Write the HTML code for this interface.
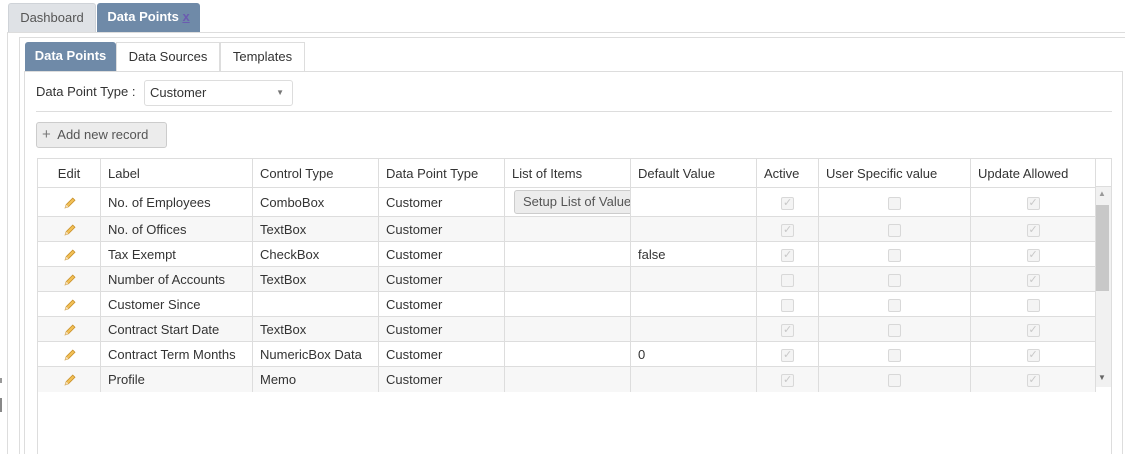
<!DOCTYPE html>
<html><head><style>
*{box-sizing:border-box;margin:0;padding:0}
html{width:1125px;height:454px;overflow:hidden}
body{width:1125px;height:454px;overflow:hidden;background:#fff;font-family:"Liberation Sans",Arial,sans-serif;font-size:13px;color:#333;position:relative}
.a{position:absolute}
.tab{position:absolute;height:29px;line-height:28px;text-align:center;font-size:13px}
table{border-collapse:collapse;table-layout:fixed;position:absolute;left:37px;top:158px;width:1058px}
td{border:1px solid #ddd;height:25px;padding:0 7px;white-space:nowrap;overflow:hidden;font-size:13px}
tr.h td{height:29px}
tr.f td{height:29px}
tr.g td{background:#f7f7f7}
.c{text-align:center}
.cb{display:inline-block;width:13px;height:13px;border:1px solid #d8d8d8;border-radius:2px;background:#f4f4f4;vertical-align:middle;position:relative}
.cb.k::after{content:"✓";position:absolute;left:1px;top:-2px;font-size:11px;color:#c8c8c8}
.pen{display:inline-block;width:13px;height:13px;vertical-align:middle}
</style></head><body>
<div class="a" style="left:7px;top:32px;width:1118px;height:422px;border-left:1px solid #ddd;border-top:1px solid #ddd"></div>
<div class="tab" style="left:8px;top:3px;width:88px;background:#dfe2e6;border:1px solid #cfd3d8;border-bottom:none;color:#555;border-radius:3px 3px 0 0">Dashboard</div>
<div class="tab" style="left:97px;top:3px;width:103px;background:#6f8aa8;color:#fff;font-weight:bold;border-radius:3px 3px 0 0">Data Points <span style="color:#6b5bb0;text-decoration:underline;font-weight:bold">x</span></div>
<div class="a" style="left:19px;top:37px;width:1106px;height:417px;border-left:1px solid #ddd;border-top:1px solid #ddd"></div>
<div class="a" style="left:24px;top:71px;width:1099px;height:383px;border-left:1px solid #ddd;border-top:1px solid #ddd;border-right:1px solid #ddd"></div>
<div class="tab" style="left:25px;top:42px;width:91px;background:#6f8aa8;color:#fff;font-weight:bold;border-radius:3px 3px 0 0">Data Points</div>
<div class="tab" style="left:116px;top:42px;width:104px;border:1px solid #ddd;border-bottom:none;background:#fff">Data Sources</div>
<div class="tab" style="left:220px;top:42px;width:85px;border:1px solid #ddd;border-bottom:none;background:#fff">Templates</div>
<div class="a" style="left:36px;top:84px;line-height:16px">Data Point Type :</div>
<div class="a" style="left:144px;top:80px;width:149px;height:26px;border:1px solid #ddd;border-radius:3px;line-height:24px;padding-left:5px">Customer<span style="position:absolute;right:8px;top:0;font-size:8px;color:#777">▼</span></div>
<div class="a" style="left:36px;top:111px;width:1076px;height:1px;background:#ddd"></div>
<div class="a" style="left:36px;top:122px;width:131px;height:26px;border:1px solid #ccc;border-radius:3px;background:#ececec;line-height:24px;padding-left:5px;color:#555"><span style="font-size:15px;color:#777">+</span>&nbsp; Add new record</div>
<div class="a" style="left:37px;top:158px;width:1075px;height:296px;border-left:1px solid #ddd;border-top:1px solid #ddd;border-right:1px solid #ddd"></div>
<div class="a" style="left:1095px;top:158px;width:17px;height:29px;border-bottom:1px solid #ddd;border-left:1px solid #ddd"></div>
<div class="a" style="left:1095px;top:187px;width:16px;height:200px;background:#f1f1f1"></div>
<div class="a" style="left:1096px;top:205px;width:13px;height:86px;background:#c8c8c8"></div>
<div class="a" style="left:1098px;top:189px;font-size:8px;color:#999">▲</div>
<div class="a" style="left:1098px;top:373px;font-size:8px;color:#666">▼</div>
<table>
<colgroup><col style="width:63px"><col style="width:152px"><col style="width:126px"><col style="width:126px"><col style="width:126px"><col style="width:126px"><col style="width:62px"><col style="width:152px"><col style="width:125px"></colgroup>
<tr class="h"><td class="c">Edit</td><td>Label</td><td>Control Type</td><td>Data Point Type</td><td>List of Items</td><td>Default Value</td><td>Active</td><td>User Specific value</td><td>Update Allowed</td></tr>
<tr class="f"><td class="c"><svg class="pen" viewBox="0 0 12 12"><path d="M2 10 L3 7 L9 1 L11 3 L5 9 Z" fill="#f2c057" stroke="#c9912a" stroke-width=".8"/><path d="M2 10 L3 7 L5 9 Z" fill="#f3ddb8"/></svg></td><td>No. of Employees</td><td>ComboBox</td><td>Customer</td><td style="padding:0 0 0 9px"><span style="display:inline-block;width:130px;height:24px;border:1px solid #ccc;border-radius:3px;background:#ececec;line-height:22px;padding-left:8px;color:#555">Setup List of Values</span></td><td></td><td class="c"><span class="cb k"></span></td><td class="c"><span class="cb"></span></td><td class="c"><span class="cb k"></span></td></tr>
<tr class="g"><td class="c"><svg class="pen" viewBox="0 0 12 12"><path d="M2 10 L3 7 L9 1 L11 3 L5 9 Z" fill="#f2c057" stroke="#c9912a" stroke-width=".8"/><path d="M2 10 L3 7 L5 9 Z" fill="#f3ddb8"/></svg></td><td>No. of Offices</td><td>TextBox</td><td>Customer</td><td></td><td></td><td class="c"><span class="cb k"></span></td><td class="c"><span class="cb"></span></td><td class="c"><span class="cb k"></span></td></tr>
<tr><td class="c"><svg class="pen" viewBox="0 0 12 12"><path d="M2 10 L3 7 L9 1 L11 3 L5 9 Z" fill="#f2c057" stroke="#c9912a" stroke-width=".8"/><path d="M2 10 L3 7 L5 9 Z" fill="#f3ddb8"/></svg></td><td>Tax Exempt</td><td>CheckBox</td><td>Customer</td><td></td><td>false</td><td class="c"><span class="cb k"></span></td><td class="c"><span class="cb"></span></td><td class="c"><span class="cb k"></span></td></tr>
<tr class="g"><td class="c"><svg class="pen" viewBox="0 0 12 12"><path d="M2 10 L3 7 L9 1 L11 3 L5 9 Z" fill="#f2c057" stroke="#c9912a" stroke-width=".8"/><path d="M2 10 L3 7 L5 9 Z" fill="#f3ddb8"/></svg></td><td>Number of Accounts</td><td>TextBox</td><td>Customer</td><td></td><td></td><td class="c"><span class="cb"></span></td><td class="c"><span class="cb"></span></td><td class="c"><span class="cb k"></span></td></tr>
<tr><td class="c"><svg class="pen" viewBox="0 0 12 12"><path d="M2 10 L3 7 L9 1 L11 3 L5 9 Z" fill="#f2c057" stroke="#c9912a" stroke-width=".8"/><path d="M2 10 L3 7 L5 9 Z" fill="#f3ddb8"/></svg></td><td>Customer Since</td><td></td><td>Customer</td><td></td><td></td><td class="c"><span class="cb"></span></td><td class="c"><span class="cb"></span></td><td class="c"><span class="cb"></span></td></tr>
<tr class="g"><td class="c"><svg class="pen" viewBox="0 0 12 12"><path d="M2 10 L3 7 L9 1 L11 3 L5 9 Z" fill="#f2c057" stroke="#c9912a" stroke-width=".8"/><path d="M2 10 L3 7 L5 9 Z" fill="#f3ddb8"/></svg></td><td>Contract Start Date</td><td>TextBox</td><td>Customer</td><td></td><td></td><td class="c"><span class="cb k"></span></td><td class="c"><span class="cb"></span></td><td class="c"><span class="cb k"></span></td></tr>
<tr><td class="c"><svg class="pen" viewBox="0 0 12 12"><path d="M2 10 L3 7 L9 1 L11 3 L5 9 Z" fill="#f2c057" stroke="#c9912a" stroke-width=".8"/><path d="M2 10 L3 7 L5 9 Z" fill="#f3ddb8"/></svg></td><td>Contract Term Months</td><td>NumericBox Data</td><td>Customer</td><td></td><td>0</td><td class="c"><span class="cb k"></span></td><td class="c"><span class="cb"></span></td><td class="c"><span class="cb k"></span></td></tr>
<tr class="g"><td class="c" style="border-bottom:none"><svg class="pen" viewBox="0 0 12 12"><path d="M2 10 L3 7 L9 1 L11 3 L5 9 Z" fill="#f2c057" stroke="#c9912a" stroke-width=".8"/><path d="M2 10 L3 7 L5 9 Z" fill="#f3ddb8"/></svg></td><td style="border-bottom:none">Profile</td><td style="border-bottom:none">Memo</td><td style="border-bottom:none">Customer</td><td style="border-bottom:none"></td><td style="border-bottom:none"></td><td class="c" style="border-bottom:none"><span class="cb k"></span></td><td class="c" style="border-bottom:none"><span class="cb"></span></td><td class="c" style="border-bottom:none"><span class="cb k"></span></td></tr>
</table>
<div class="a" style="left:0;top:378px;width:2px;height:5px;background:#999"></div>
<div class="a" style="left:0;top:398px;width:2px;height:14px;background:#888"></div>
</body></html>
